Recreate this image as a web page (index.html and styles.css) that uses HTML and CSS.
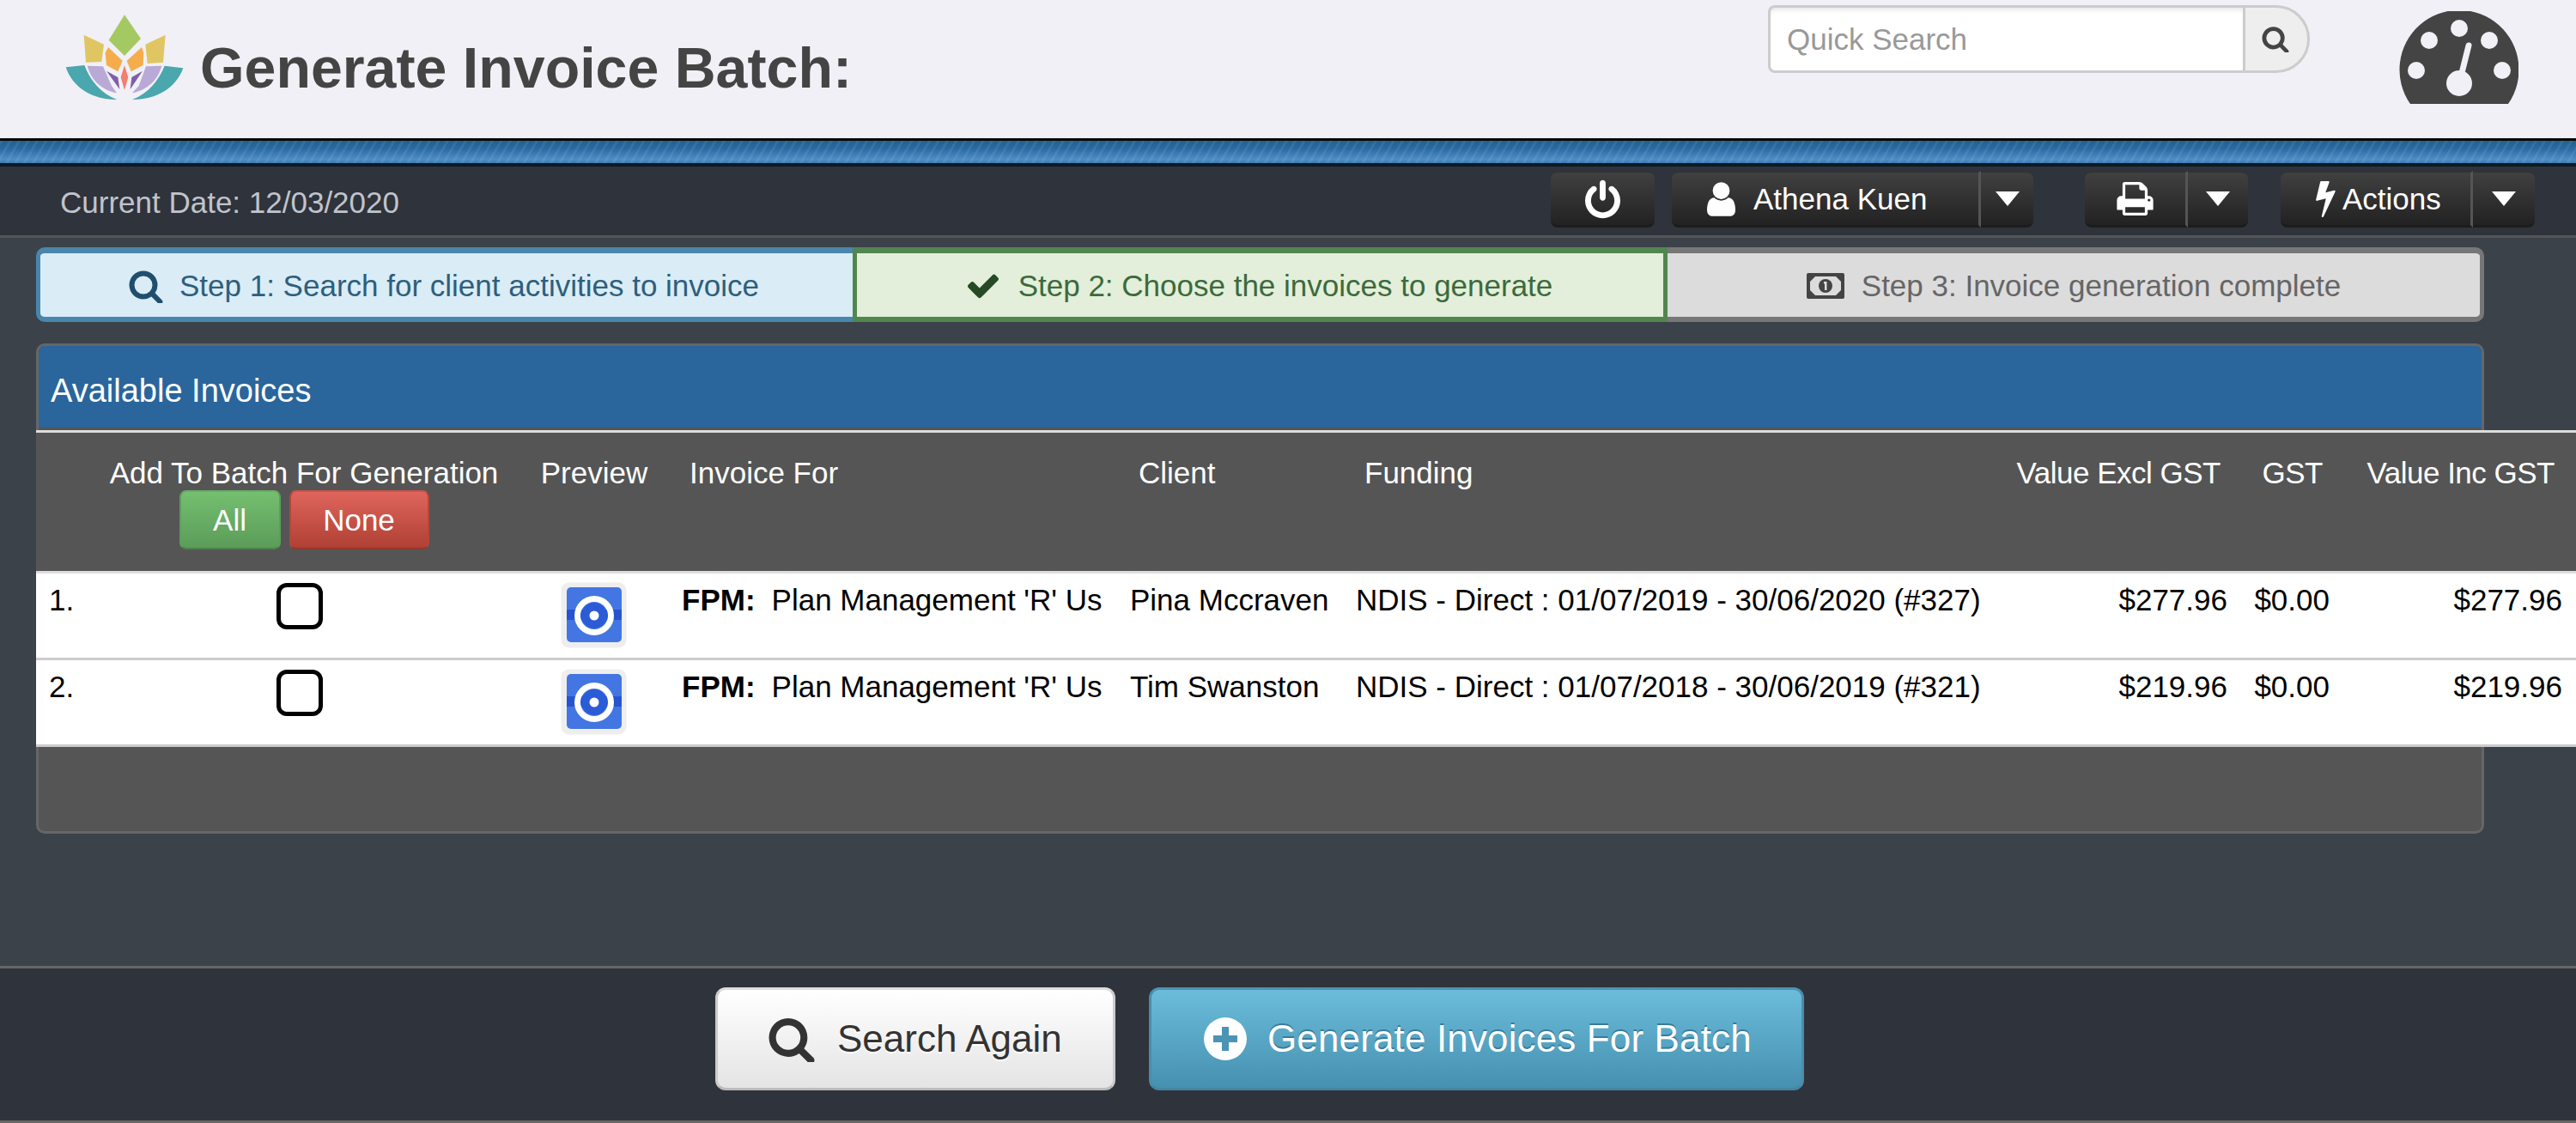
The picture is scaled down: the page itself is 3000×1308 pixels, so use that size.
FILE: index.html
```html
<!DOCTYPE html>
<html lang="en">
<head>
<meta charset="utf-8">
<title>Generate Invoice Batch</title>
<link rel="stylesheet" href="styles.css">
</head>
<body>
<svg class="defs" width="0" height="0" aria-hidden="true">
  <symbol id="i-search" viewBox="64 64 1664 1664"><path d="M1216 832q0-185-131.500-316.500t-316.500-131.500-316.500 131.500-131.500 316.500 131.500 316.500 316.500 131.500 316.500-131.500 131.500-316.500zm512 832q0 52-38 90t-90 38q-54 0-90-38l-343-342q-179 124-399 124-143 0-273.500-55.500t-225-150-150-225-55.500-273.500 55.500-273.500 150-225 225-150 273.500-55.500 273.500 55.500 225 150 150 225 55.500 273.500q0 220-124 399l343 343q37 37 37 90z"/></symbol>
  <symbol id="i-power" viewBox="128 0 1536 1664"><path d="M1664 896q0 156-61 298t-164 245-245 164-298 61-298-61-245-164-164-245-61-298q0-182 80.500-343t226.500-270q43-32 95.500-25t83.500 50q32 42 24.500 94.500t-49.500 84.500q-98 74-151.500 181t-53.500 228q0 104 40.500 198.500t109.500 163.500 163.500 109.500 198.500 40.500 198.500-40.500 163.500-109.500 109.500-163.500 40.500-198.500q0-121-53.500-228t-151.500-181q-42-32-49.500-84.500t24.500-94.500q31-43 84-50t95 25q146 109 226.500 270t80.500 343zm-640-768v640q0 52-38 90t-90 38-90-38-38-90v-640q0-52 38-90t90-38 90 38 38 90z"/></symbol>
  <symbol id="i-user" viewBox="256 128 1280 1536"><path d="M1536 1399q0 109-62.500 187t-150.500 78h-854q-88 0-150.500-78t-62.500-187q0-85 8.500-160.500t31.500-152 58.500-131 94-89 134.500-34.500q131 128 313 128t313-128q76 0 134.500 34.500t94 89 58.500 131 31.500 152 8.500 160.500zm-256-887q0 159-112.500 271.500t-271.500 112.500-271.500-112.500-112.500-271.500 112.500-271.500 271.500-112.500 271.500 112.500 112.500 271.500z"/></symbol>
  <symbol id="i-print" viewBox="64 128 1664 1536"><path d="M448 1536h896v-256h-896v256zm0-640h896v-384h-160q-40 0-68-28t-28-68v-160h-640v640zm1152 64q0-26-19-45t-45-19-45 19-19 45 19 45 45 19 45-19 19-45zm128 0v416q0 13-9.500 22.500t-22.500 9.500h-224v160q0 40-28 68t-68 28h-960q-40 0-68-28t-28-68v-160h-224q-13 0-22.500-9.500t-9.500-22.500v-416q0-79 56.500-135.500t135.500-56.500h64v-544q0-40 28-68t68-28h672q40 0 88 20t76 48l152 152q28 28 48 76t20 88v256h64q79 0 135.500 56.500t56.500 135.500z"/></symbol>
  <symbol id="i-bolt" viewBox="450 128 900 1664"><path d="M1333 566q18 20 7 44l-540 1157q-13 25-42 25-4 0-14-2-17-5-25.500-19t-4.500-30l197-808-406 101q-4 1-12 1-18 0-31-11-18-15-13-39l201-825q4-14 16-23t28-9h328q19 0 32 12.500t13 29.500q0 8-5 18l-171 463 396-98q8-2 12-2 19 0 34 15z"/></symbol>
  <symbol id="i-check" viewBox="121 300 1550 1220"><path d="M1671 566q0 40-28 68l-724 724-136 136q-28 28-68 28t-68-28l-136-136-362-362q-28-28-28-68t28-68l136-136q28-28 68-28t68 28l294 295 656-657q28-28 68-28t68 28l136 136q28 28 28 68z"/></symbol>
  <symbol id="i-target" viewBox="0 0 77 77">
    <rect x="0.500" y="0.500" width="76" height="76" rx="9" fill="#eeeeee"/>
    <rect x="7" y="6" width="64" height="64" rx="5" fill="#4376e2"/>
    <rect x="7" y="32" width="64" height="12" fill="#2654cf"/>
    <circle cx="39" cy="39" r="19.500" fill="none" stroke="#ffffff" stroke-width="7"/>
    <circle cx="39" cy="39" r="15" fill="#2b5bd6"/>
    <circle cx="39" cy="39" r="5.500" fill="#ffffff"/>
  </symbol>
</svg>

<header class="masthead">
  <svg class="logo" viewBox="60 0 450 390" aria-hidden="true">
    <path fill="#a4c963" d="M285 52 L342 135 L285 195 L230 140 Z"/>
    <path fill="#e0c662" d="M143 122 L213 155 L205 216 L150 218 Z"/>
    <path fill="#e0c662" d="M428 122 L358 155 L365 222 L420 218 Z"/>
    <path fill="#f5ad4c" d="M228 165 L278 212 L262 250 L222 228 L218 185 Z"/>
    <path fill="#f5ad4c" d="M345 165 L293 212 L308 250 L350 228 L352 185 Z"/>
    <path fill="#b9a9d6" d="M155 230 L210 232 L240 300 L258 325 C210 315 170 285 155 230 Z"/>
    <path fill="#b9a9d6" d="M415 230 L360 232 L335 300 L312 325 C360 315 400 285 415 230 Z"/>
    <path fill="#7f5fa8" d="M222 248 L262 270 L268 312 Z"/>
    <path fill="#7f5fa8" d="M348 248 L310 270 L305 312 Z"/>
    <path fill="#f08070" d="M285 228 L298 270 L285 315 L272 270 Z"/>
    <path fill="#4aa7ad" d="M80 235 L145 228 C165 280 200 325 258 348 C180 350 105 310 80 235 Z"/>
    <path fill="#4aa7ad" d="M490 238 L425 230 C405 280 370 325 312 348 C390 350 465 310 490 238 Z"/>
  </svg>
  <h1 class="title">Generate Invoice Batch:</h1>
  <form class="quick-search">
    <input class="quick-input" type="text" placeholder="Quick Search">
    <span class="quick-btn"><svg class="ic-quick"><use href="#i-search"/></svg></span>
  </form>
  <svg class="gauge" viewBox="0 0 139 108" aria-hidden="true">
    <path fill="#444444" d="M13 108 A69.500 69.500 0 1 1 127 108 Z"/>
    <g fill="#f0f0f6">
      <circle cx="70" cy="20" r="10"/>
      <circle cx="35" cy="34" r="10"/>
      <circle cx="105" cy="34" r="10"/>
      <circle cx="20" cy="69" r="10"/>
      <circle cx="120" cy="69" r="10"/>
      <circle cx="70" cy="84" r="15"/>
    </g>
    <path stroke="#f0f0f6" stroke-width="7" stroke-linecap="round" d="M70 84 L81 40"/>
  </svg>
</header>

<div class="stripe"></div>

<nav class="topbar">
  <span class="date">Current Date: 12/03/2020</span>
  <div class="tools">
    <div class="tool tool-power"><button class="tb"><svg class="ic-power"><use href="#i-power"/></svg></button></div>
    <div class="tool tool-user">
      <button class="tb tb-main"><svg class="ic-user"><use href="#i-user"/></svg>Athena Kuen</button>
      <button class="tb tb-caret"><span class="caret"></span></button>
    </div>
    <div class="tool tool-print">
      <button class="tb tb-main"><svg class="ic-print"><use href="#i-print"/></svg></button>
      <button class="tb tb-caret"><span class="caret"></span></button>
    </div>
    <div class="tool tool-actions">
      <button class="tb tb-main"><svg class="ic-bolt"><use href="#i-bolt"/></svg>Actions</button>
      <button class="tb tb-caret"><span class="caret"></span></button>
    </div>
  </div>
</nav>

<main class="content">
  <ol class="steps">
    <li class="step step-one"><svg class="ic-step"><use href="#i-search"/></svg>Step 1: Search for client activities to invoice</li>
    <li class="step step-two"><svg class="ic-step"><use href="#i-check"/></svg>Step 2: Choose the invoices to generate</li>
    <li class="step step-three">
      <svg class="ic-money" viewBox="0 0 44 30" aria-hidden="true">
        <rect width="44" height="30" rx="2" fill="#444444"/>
        <path fill="#dcdcdc" d="M10 4 H34 L40 10 V20 L34 26 H10 L4 20 V10 Z"/>
        <circle cx="22" cy="15" r="8" fill="#444444"/>
        <path fill="#dcdcdc" d="M20 10 H23.500 V20 H21 V12.500 H20 Z"/>
      </svg>Step 3: Invoice generation complete</li>
  </ol>

  <section class="panel">
    <h2 class="panel-title">Available Invoices</h2>
    <table class="invoices">
      <colgroup>
        <col class="c-num"><col class="c-add"><col class="c-prev"><col class="c-for"><col class="c-client"><col class="c-fund"><col class="c-excl"><col class="c-gst"><col class="c-inc">
      </colgroup>
      <thead>
        <tr>
          <th></th>
          <th class="center">Add To Batch For Generation
            <div class="pick"><button class="pick-btn pick-all">All</button><button class="pick-btn pick-none">None</button></div>
          </th>
          <th class="center">Preview</th>
          <th>Invoice For</th>
          <th>Client</th>
          <th>Funding</th>
          <th class="right">Value Excl GST</th>
          <th class="right">GST</th>
          <th class="right last">Value Inc GST</th>
        </tr>
      </thead>
      <tbody>
        <tr>
          <td>1.</td>
          <td class="cell-check"><span class="check"></span></td>
          <td class="center cell-icon"><svg class="ic-target"><use href="#i-target"/></svg></td>
          <td><b class="org">FPM:</b>Plan Management 'R' Us</td>
          <td>Pina Mccraven</td>
          <td>NDIS - Direct : 01/07/2019 - 30/06/2020 (#327)</td>
          <td class="right">$277.96</td>
          <td class="right">$0.00</td>
          <td class="right last">$277.96</td>
        </tr>
        <tr>
          <td>2.</td>
          <td class="cell-check"><span class="check"></span></td>
          <td class="center cell-icon"><svg class="ic-target"><use href="#i-target"/></svg></td>
          <td><b class="org">FPM:</b>Plan Management 'R' Us</td>
          <td>Tim Swanston</td>
          <td>NDIS - Direct : 01/07/2018 - 30/06/2019 (#321)</td>
          <td class="right">$219.96</td>
          <td class="right">$0.00</td>
          <td class="right last">$219.96</td>
        </tr>
      </tbody>
    </table>
  </section>
</main>

<footer class="footer">
  <button class="fbtn fbtn-search"><svg class="ic-fsearch"><use href="#i-search"/></svg>Search Again</button>
  <button class="fbtn fbtn-generate">
    <svg class="ic-plus" viewBox="0 0 50 50" aria-hidden="true">
      <circle cx="25" cy="25" r="25" fill="#ffffff"/>
      <path fill="#4b94b4" d="M21 11 H29 V21 H39 V29 H29 V39 H21 V29 H11 V21 H21 Z"/>
    </svg><span class="fbtn-label">Generate Invoices For Batch</span></button>
</footer>
</body>
</html>
```

FILE: styles.css
```css
* { box-sizing: border-box; }
html, body { margin: 0; padding: 0; }
body {
  width: 3000px;
  height: 1308px;
  overflow: hidden;
  display: flex;
  flex-direction: column;
  background: #3b424a;
  font-family: "Liberation Sans", Arial, sans-serif;
  font-size: 35px;
  line-height: 40px;
  color: #000;
}
.defs { position: absolute; }
button { font: inherit; cursor: pointer; }

/* masthead */
.masthead {
  height: 161px;
  flex: none;
  display: flex;
  align-items: flex-start;
  padding: 0 67px 0 70px;
  background: #f0f0f6;
}
.logo { width: 150px; height: 130px; filter: blur(0.7px); }
.title {
  margin: 39px 0 0 13px;
  font-size: 66.300px;
  line-height: 80px;
  font-weight: 700;
  color: #444;
}
.quick-search { display: flex; margin: 6px 0 0 auto; height: 79px; }
.quick-input {
  width: 553px;
  height: 79px;
  padding: 0 19px;
  border: 3px solid #ccc;
  border-right: 0;
  border-radius: 8px 0 0 8px;
  background: #fff;
  box-shadow: inset 0 5px 5px -2px #e8e8e8;
  font: inherit;
}
.quick-input::placeholder { color: #999; opacity: 1; }
.quick-btn {
  width: 78px;
  display: flex;
  align-items: center;
  justify-content: center;
  border: 3px solid #ccc;
  border-radius: 0 40px 40px 0;
  background: #eee;
  fill: #444;
}
.ic-quick { width: 32px; height: 31px; margin-right: 2px; }
.gauge { width: 139px; height: 108px; margin: 13px 0 0 104px; }

/* stripe */
.stripe {
  height: 33px;
  flex: none;
  border-top: 3px solid #050505;
  border-bottom: 4px solid #0c1a26;
  background:
    repeating-linear-gradient(120deg, rgba(255,255,255,.07) 0 3px, rgba(255,255,255,0) 3px 9px),
    linear-gradient(#23608f, #2a6aa3 35%, #4f8ec6 85%, #3a78ae);
}

/* top bar */
.topbar {
  height: 83px;
  flex: none;
  display: flex;
  align-items: center;
  padding: 3px 48px 0 70px;
  background: #2f333b;
  border-bottom: 3px solid #555;
}
.date { color: #c0c4cc; }
.tools { display: flex; margin-left: auto; align-self: flex-start; margin-top: 2px; }
.tool { display: flex; height: 66px; }
.tool-user { margin-left: 20px; }
.tool-print { margin-left: 60px; }
.tool-actions { margin-left: 38px; }
.tb {
  display: flex;
  align-items: center;
  justify-content: center;
  height: 66px;
  padding: 0;
  border: 0;
  border-top: 2px solid #333;
  border-bottom: 3px solid #1c1c1c;
  border-radius: 8px;
  background: linear-gradient(#404040, #222);
  color: #fff;
  fill: #fff;
}
.tb-main { border-radius: 8px 0 0 8px; border-right: 3px solid #555; }
.tb-caret { width: 61px; border-radius: 0 8px 8px 0; }
.tool-power .tb { width: 121px; }
.tool-user .tb-main { width: 360px; justify-content: flex-start; padding-left: 41px; }
.tool-print .tb-main { width: 120px; }
.tool-print .tb-caret { width: 70px; }
.tool-actions .tb-main { width: 224px; justify-content: flex-start; padding-left: 41px; }
.tool-actions .tb-caret { width: 72px; }
.ic-power { width: 41px; height: 46px; }
.ic-user { width: 33px; height: 40px; margin-right: 21px; }
.ic-print { width: 43px; height: 39px; }
.ic-bolt { width: 23px; height: 42px; margin-right: 8px; }
.caret {
  width: 0;
  height: 0;
  border-left: 14px solid transparent;
  border-right: 14px solid transparent;
  border-top: 17px solid #fff;
}

/* content */
.content { flex: 1; padding: 11px 107px 0 42px; min-height: 0; }
.steps { display: flex; height: 87px; margin: 0 0 25px; padding: 0; list-style: none; }
.step {
  flex: 1;
  display: flex;
  align-items: center;
  justify-content: center;
  padding-top: 2px;
  border-style: solid;
  border-width: 7px 5px 6px;
}
.step-one { flex-basis: 951px; padding-right: 6px; background: #daecf6; border-color: #4a86ab; color: #2d5f7d; fill: #204f6e; border-right: 0; border-radius: 10px 0 0 10px; }
.step-two { flex-basis: 949px; background: #e3efda; border-color: #51864f; color: #3c6a3c; fill: #264a26; }
.step-three { flex-basis: 951px; background: #dcdcdc; border-color: #777; color: #666; border-left: 0; border-radius: 0 10px 10px 0; }
.ic-step { width: 40px; height: 39px; margin-right: 19px; }
.step-two .ic-step { width: 36px; height: 30px; margin-right: 23px; }
.ic-money { width: 44px; height: 30px; margin-right: 20px; }

.panel {
  height: 571px;
  border: 3px solid #666;
  border-radius: 10px;
  background: #555;
}
.panel-title {
  height: 98px;
  margin: 0;
  padding: 8px 0 0 14px;
  display: flex;
  align-items: center;
  border-bottom: 3px solid #555;
  border-radius: 7px 7px 0 0;
  background: #2a659c;
  color: #fff;
  font-size: 38px;
  line-height: 44px;
  font-weight: 400;
}

/* table */
.invoices {
  width: 2959px;
  margin-left: -3px;
  table-layout: fixed;
  border-collapse: separate;
  border-spacing: 0;
}
.c-num { width: 66px; }
.c-add { width: 491px; }
.c-prev { width: 185px; }
.c-for { width: 523px; }
.c-client { width: 263px; }
.c-fund { width: 761px; }
.c-excl { width: 273px; }
.c-gst { width: 119px; }
.c-inc { width: 278px; }
.invoices th {
  height: 167px;
  padding: 27px 18px 0 19px;
  border-top: 3px solid #ddd;
  border-bottom: 3px solid #ddd;
  background: #555;
  color: #fff;
  font-weight: 400;
  text-align: left;
  vertical-align: top;
  white-space: nowrap;
}
.invoices td {
  height: 101px;
  padding: 11px 10px 0 9px;
  border-bottom: 3px solid #ccc;
  background: #fff;
  vertical-align: top;
  white-space: nowrap;
}
.invoices td:first-child { padding-left: 15px; }
.invoices .center { text-align: center; }
.invoices .right { text-align: right; }
.invoices th.right { padding-left: 0; letter-spacing: -0.500px; }
.invoices th.last { padding-right: 26px; }
.invoices td.last { padding-right: 17px; }
.org { margin-right: 19px; margin-left: 1px; }
.pick { display: flex; justify-content: center; gap: 10px; }
.pick-btn {
  height: 69px;
  padding: 0;
  border: 2px solid transparent;
  border-radius: 8px;
  color: #fff;
}
.pick-all {
  width: 118px;
  background: linear-gradient(#74bf70, #5b9c59);
  border-color: #6aac67 #5e9e5b #4a854a;
}
.pick-none {
  width: 163px;
  background: linear-gradient(#e0655c, #af4034);
  border-color: #c9544a #b5463b #97362c;
}
.invoices td.cell-check { padding: 11px 0 0 214px; }
.check {
  display: block;
  width: 54px;
  height: 54px;
  border: 5px solid #000;
  border-radius: 12px;
  background: #fff;
}
.invoices td.cell-icon { padding: 10px 0 0; line-height: 0; }
.ic-target { width: 77px; height: 77px; filter: blur(0.6px); }

/* footer */
.footer {
  height: 183px;
  flex: none;
  display: flex;
  justify-content: flex-start;
  align-items: flex-start;
  gap: 39px;
  padding: 22px 0 0 833px;
  background: #2f333b;
  border-top: 3px solid #666;
  border-bottom: 3px solid #666;
}
.fbtn {
  display: flex;
  align-items: center;
  height: 120px;
  padding: 0;
  border-radius: 12px;
  border-style: solid;
  border-width: 3px;
  font-size: 44px;
}
.fbtn-search {
  width: 466px;
  padding-left: 58px;
  border-color: #ddd #ccc #bbb;
  background: linear-gradient(#fff, #e4e4e4);
  color: #333;
  fill: #333;
  text-shadow: 0 2px 0 #fff;
}
.fbtn-generate {
  width: 763px;
  padding-left: 61px;
  border-color: #4e93b2 #4a8dab #45869f;
  background: linear-gradient(#6bbcda, #4690b0);
  color: #fff;
  text-shadow: 0 -2px 0 #3a7a98;
}
.fbtn-label { letter-spacing: 0.140px; }
.ic-fsearch { width: 56px; height: 53px; margin-right: 25px; }
.ic-plus { width: 50px; height: 52px; margin-right: 24px; }
```
